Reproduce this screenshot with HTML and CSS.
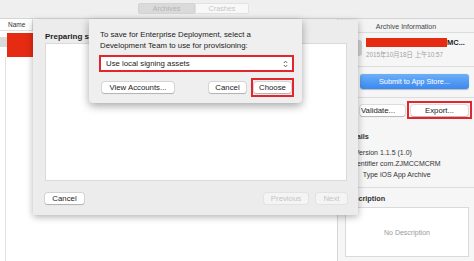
FILE: index.html
```html
<!DOCTYPE html>
<html lang="en">
<head>
    <meta charset="UTF-8">
    <title>Organizer - Archives</title>
    <link rel="stylesheet" href="styles.css">
</head>
<body>
<div class="window">
    <div class="toolbar">
        <div class="segmented">
            <span class="seg seg-on">Archives</span>
            <span class="seg">Crashes</span>
        </div>
    </div>

    <div class="main">
        <!-- archive list -->
        <div class="list">
            <div class="list-head"><span class="col-name">Name</span></div>
            <div class="list-row">
                <span class="row-sel"></span>
                <span class="redact row-redact"></span>
            </div>
            <div class="list-rest"></div>
        </div>

        <!-- archive information -->
        <div class="info">
            <div class="info-head">Archive Information</div>
            <div class="app">
                <div class="app-icon"></div>
                <div class="app-text">
                    <div class="app-name"><span class="redact name-redact"></span><b>MC...</b></div>
                    <div class="app-date">2015年10月18日 上午10:57</div>
                </div>
            </div>
            <div class="submit-row">
                <div class="btn-blue">Submit to App Store...</div>
            </div>
            <div class="actions">
                <div class="btn btn-validate">Validate...</div>
                <div class="mark mark-export"><div class="btn btn-export">Export...</div></div>
            </div>
            <div class="details">
                <div class="section-title">Details</div>
                <div class="detail-grid">
                    <span class="label">Version</span><span>1.1.5 (1.0)</span>
                    <span class="label">Identifier</span><span>com.ZJMCCMCRM</span>
                    <span class="label">Type</span><span>iOS App Archive</span>
                </div>
            </div>
            <div class="description">
                <div class="section-title">Description</div>
                <div class="desc-box">No Description</div>
            </div>
        </div>
    </div>

    <!-- export sheet -->
    <div class="sheet">
        <div class="sheet-title">Preparing signing assets</div>
        <div class="sheet-body"></div>
        <div class="sheet-foot">
            <div class="btn btn-cancel">Cancel</div>
            <div class="btn btn-off btn-prev">Previous</div>
            <div class="btn btn-off btn-next">Next</div>
        </div>
    </div>

    <!-- team picker -->
    <div class="popup">
        <p class="popup-text">To save for Enterprise Deployment, select a<br>Development Team to use for provisioning:</p>
        <div class="mark mark-select">
            <div class="select">
                <span>Use local signing assets</span>
                <svg class="chevrons" width="5" height="8" viewBox="0 0 5 8">
                    <path d="M0.8 3 L2.5 1.2 L4.2 3 M0.8 5 L2.5 6.8 L4.2 5" fill="none" stroke="#555" stroke-width="0.9"/>
                </svg>
            </div>
        </div>
        <div class="popup-foot">
            <div class="btn btn-accounts">View Accounts...</div>
            <div class="btn btn-pop-cancel">Cancel</div>
            <div class="mark mark-choose"><div class="btn btn-choose">Choose</div></div>
        </div>
    </div>
</div>
</body>
</html>
```

FILE: styles.css
```css
* {
    box-sizing: border-box;
}
body {
    margin: 0;
    font-family: "Liberation Sans", Arial, "Noto Sans CJK SC", sans-serif;
    font-size: 7.8px;
    color: #222;
    background: #fff;
}
.window {
    position: relative;
    width: 474px;
    height: 261px;
    overflow: hidden;
}

/* toolbar */
.toolbar {
    height: 19px;
    background: #efefef;
    border-bottom: 1px solid #d4d4d4;
    padding: 3px 0 0 138px;
}
.segmented {
    display: flex;
    height: 11px;
}
.seg {
    width: 54px;
    background: #f8f8f8;
    color: #c6c6c6;
    font-size: 7.2px;
    line-height: 9px;
    text-align: center;
    border: 1px solid #e2e2e2;
    border-radius: 0 2px 2px 0;
}
.seg-on {
    width: 57px;
    background: #dadada;
    color: #b4b4b4;
    border-color: #d4d4d4;
    border-radius: 2px 0 0 2px;
}

/* main area */
.main {
    display: flex;
    height: 242px;
}
.list {
    width: 337px;
    display: flex;
    flex-direction: column;
    background: #fff;
}
.list-head {
    height: 12px;
    border-bottom: 1px solid #e0e0e0;
    display: flex;
}
.col-name {
    width: 33px;
    border-right: 1px solid #e0e0e0;
    padding-left: 8px;
    font-size: 6.5px;
    line-height: 11px;
    color: #333;
}
.list-row {
    display: flex;
    margin-top: 2px;
    height: 24px;
}
.row-sel {
    width: 7px;
    height: 10px;
    margin-top: 4px;
    background: #dadada;
}
.redact {
    display: inline-block;
    background: #e52b12;
}
.row-redact {
    width: 26px;
    height: 24px;
}
.list-rest {
    flex: 1;
    margin-left: 5px;
    border-left: 1px solid #e2e2e2;
}

/* info panel */
.info {
    flex: 1;
    background: #f6f6f6;
    border-left: 1px solid #d6d6d6;
    display: flex;
    flex-direction: column;
}
.info-head {
    height: 14px;
    line-height: 15px;
    text-align: center;
    font-size: 7px;
    color: #444;
    background: #f3f3f3;
    border-bottom: 1px solid #dcdcdc;
}
.app {
    height: 34px;
    display: flex;
    gap: 4px;
    padding: 5px 0 0 8px;
    border-bottom: 1px solid #dcdcdc;
}
.app-icon {
    width: 16px;
    height: 16px;
    margin-top: 2px;
    border-radius: 3px;
    background: #cfcfcf;
}
.app-name {
    display: flex;
    align-items: center;
    height: 9px;
    font-size: 7.5px;
}
.name-redact {
    width: 81px;
    height: 9px;
}
.app-date {
    margin-top: 3px;
    font-size: 6.3px;
    color: #a3a3a3;
    white-space: nowrap;
}
.submit-row {
    height: 31px;
    padding: 7px 0 0 22px;
    border-bottom: 1px solid #dcdcdc;
}
.btn-blue {
    width: 109px;
    height: 15px;
    line-height: 15px;
    text-align: center;
    font-size: 7.3px;
    color: #fff;
    border-radius: 3px;
    background: linear-gradient(#6cb0f8, #3b88ef);
    box-shadow: 0 0.5px 1px rgba(0, 0, 0, 0.25);
}
.actions {
    height: 24px;
    display: flex;
    align-items: center;
    padding-left: 22px;
}

/* buttons */
.btn {
    height: 11px;
    line-height: 11px;
    text-align: center;
    background: #fff;
    border-radius: 2px;
    box-shadow: 0 0 0 0.5px rgba(0, 0, 0, 0.18), 0 0.5px 1px rgba(0, 0, 0, 0.18);
    white-space: nowrap;
}
.btn-off {
    background: #f4f4f4;
    color: #c4c4c4;
    box-shadow: 0 0 0 0.5px rgba(0, 0, 0, 0.08);
}
.mark {
    border: 2px solid #e3262b;
    display: flex;
    align-items: center;
    justify-content: center;
}
.btn-validate {
    width: 45px;
    text-align: left;
    padding-left: 1px;
}
.mark-export {
    width: 65px;
    height: 18px;
    margin-left: 2px;
}
.btn-export {
    width: 57px;
}

.details {
    padding: 10px 0 7px 7px;
    border-bottom: 1px solid #dcdcdc;
}
.section-title {
    font-weight: bold;
    font-size: 7.3px;
    line-height: 10px;
    color: #333;
}
.detail-grid {
    display: grid;
    grid-template-columns: 33px auto;
    column-gap: 2px;
    margin-top: 5px;
    font-size: 7px;
    line-height: 11px;
    color: #333;
}
.label {
    text-align: right;
}
.description {
    padding: 6px 0 0 7px;
}
.desc-box {
    margin-top: 3px;
    width: 124px;
    height: 50px;
    background: #fff;
    border: 1px solid #dadada;
    display: flex;
    align-items: center;
    justify-content: center;
    font-size: 7px;
    color: #9a9a9a;
}

/* sheet */
.sheet {
    position: absolute;
    left: 33px;
    top: 20px;
    width: 325px;
    height: 195px;
    background: #ececec;
    padding: 10px 11px 0 12px;
    box-shadow: 0 2px 7px rgba(0, 0, 0, 0.3);
}
.sheet-title {
    font-weight: bold;
    font-size: 8px;
    line-height: 13px;
    white-space: nowrap;
}
.sheet-body {
    height: 138px;
    background: #fff;
    border: 1px solid #dadada;
}
.sheet-foot {
    display: flex;
    margin-top: 12px;
}
.btn-cancel {
    width: 39px;
}
.btn-prev {
    width: 44px;
    margin-left: auto;
}
.btn-next {
    width: 31px;
    margin-left: 8px;
}

/* popup */
.popup {
    position: absolute;
    left: 89px;
    top: 19px;
    width: 213px;
    height: 84px;
    background: #efefef;
    padding: 10px 8px 0 10px;
    border-radius: 0 0 4px 4px;
    box-shadow: 0 3px 9px rgba(0, 0, 0, 0.35);
}
.popup-text {
    margin: 0;
    padding-left: 1px;
    line-height: 11px;
    white-space: nowrap;
}
.mark-select {
    margin-top: 4px;
    height: 17px;
}
.select {
    flex: 1;
    height: 13px;
    display: flex;
    align-items: center;
    justify-content: space-between;
    padding: 0 4px 0 5px;
    background: #fff;
}
.popup-foot {
    display: flex;
    align-items: center;
    height: 19px;
    margin-top: 6px;
}
.btn-accounts {
    width: 72px;
    margin-left: 3px;
}
.btn-pop-cancel {
    width: 37px;
    margin-left: auto;
}
.mark-choose {
    width: 43px;
    height: 19px;
    margin-left: 5px;
}
.btn-choose {
    width: 37px;
}
```
